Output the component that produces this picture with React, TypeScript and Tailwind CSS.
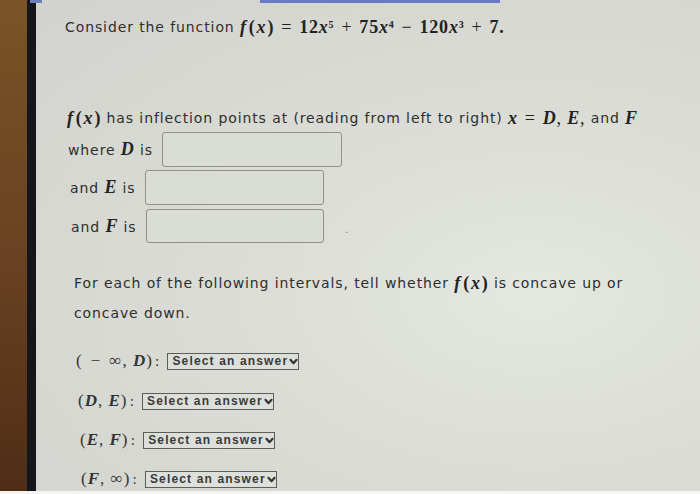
import React from 'react';

const sans = "font-['DejaVu_Sans',sans-serif]";
const serif = "font-['Liberation_Serif','DejaVu_Serif',serif]";
const mathText = `${serif} text-[18px] tracking-[0.8px] text-[#222]`;

const V: React.FC<{ children: React.ReactNode; className?: string }> = ({ children, className = '' }) => (
  <span className={`${serif} italic font-bold ${className}`}>{children}</span>
);

const Num: React.FC<{ children: React.ReactNode }> = ({ children }) => (
  <span className={`${serif} font-bold`}>{children}</span>
);

const Fx = () => (
  <span className={mathText}>
    <V className="pr-[2px]">f</V>
    <Num>(</Num>
    <V className="px-[1px]">x</V>
    <Num>)</Num>
  </span>
);

const Op: React.FC<{ children: React.ReactNode }> = ({ children }) => (
  <span className="mx-[7px]">{children}</span>
);

const AnswerBox: React.FC<{ width: string }> = ({ width }) => (
  <div className={`${width} h-full rounded-[3px] border-[1.5px] border-[#8e918c] bg-[#dadcd6]`} />
);

const SelectBox: React.FC = () => (
  <div className="flex h-[17px] w-[132px] shrink-0 items-center overflow-hidden whitespace-nowrap border border-[#5c5e5a] bg-[#dde0da] pl-[4px]">
    <span className="font-['Liberation_Sans',Arial,sans-serif] text-[12px] font-bold leading-none tracking-[1.15px] text-[#3a3a3a]">
      Select an answer
    </span>
    <svg className="ml-[1px] shrink-0" width="9" height="7" viewBox="0 0 10 8" fill="none">
      <path d="M1.5 2 L5 6 L8.5 2" stroke="#333" strokeWidth="2.4" strokeLinecap="round" strokeLinejoin="round" />
    </svg>
  </div>
);

const Interval: React.FC<{ children: React.ReactNode; ml: string; mt: string }> = ({ children, ml, mt }) => (
  <div className={`flex h-[24px] items-center ${ml} ${mt}`}>
    <span className={`${serif} whitespace-nowrap text-[17px] tracking-[1px] text-[#333]`}>{children}</span>
    <span className={`${sans} ml-[2px] mr-[7px] text-[14px] text-[#333]`}>:</span>
    <SelectBox />
  </div>
);

export default function App() {
  return (
    <div className="flex h-[494px] w-[700px] flex-col overflow-hidden bg-white">
      <div className="flex flex-1">
        <div className="w-[27px] bg-[linear-gradient(180deg,#7a5326_0%,#6a4322_50%,#4f2d17_100%)]" />
        <div className="w-[9px] bg-[#15161b]" />
        <div
          className={`flex flex-1 flex-col ${sans} text-[14px] tracking-[0.9px] text-[#2e2e2e] bg-[radial-gradient(ellipse_at_75%_60%,#e4e8e1_0%,#dadcd5_45%,#d2d3ce_100%)]`}
        >
          <div className="flex h-[3px]">
            <div className="ml-[-6px] w-[12px] bg-[#6f7fb8]" />
            <div className="ml-[218px] w-[240px] bg-[#6d79c2]" />
          </div>

          <div className="ml-[29px] mt-[12px] flex h-[24px] items-center whitespace-nowrap">
            <span>Consider the function&nbsp;</span>
            <span className={mathText}>
              <V className="pr-[2px]">f</V>
              <Num>(</Num>
              <V className="px-[1px]">x</V>
              <Num>)</Num>
              <Op>=</Op>
              <Num>12</Num>
              <V>x</V>
              <sup className="text-[10px] font-bold">5</sup>
              <Op>+</Op>
              <Num>75</Num>
              <V>x</V>
              <sup className="text-[10px] font-bold">4</sup>
              <Op>−</Op>
              <Num>120</Num>
              <V>x</V>
              <sup className="text-[10px] font-bold">3</sup>
              <Op>+</Op>
              <Num>7.</Num>
            </span>
          </div>

          <div className="ml-[31px] mt-[67px] flex h-[24px] items-center whitespace-nowrap">
            <Fx />
            <span>&nbsp;has inflection points at (reading from left to right)&nbsp;</span>
            <span className={mathText}>
              <V>x</V>
              <Op>=</Op>
              <V>D</V>, <V>E</V>,
            </span>
            <span>&nbsp;and&nbsp;</span>
            <span className={mathText}>
              <V>F</V>
            </span>
          </div>

          <div className="ml-[32px] mt-[2px] flex h-[35px] items-center">
            <span className="w-[94px] whitespace-nowrap">
              where <span className={mathText}><V>D</V></span> is
            </span>
            <AnswerBox width="w-[180px]" />
          </div>

          <div className="ml-[34px] mt-[3px] flex h-[35px] items-center">
            <span className="w-[75px] whitespace-nowrap">
              and <span className={mathText}><V>E</V></span> is
            </span>
            <AnswerBox width="w-[179px]" />
          </div>

          <div className="ml-[35px] mt-[4px] flex h-[34px] items-center">
            <span className="w-[75px] whitespace-nowrap">
              and <span className={mathText}><V>F</V></span> is
            </span>
            <AnswerBox width="w-[178px]" />
            <span className="ml-[21px] mt-[6px] text-[10px] text-[#777]">.</span>
          </div>

          <div className="ml-[38px] mt-[28px] flex h-[24px] items-center whitespace-nowrap">
            <span>For each of the following intervals, tell whether&nbsp;</span>
            <Fx />
            <span>&nbsp;is concave up or</span>
          </div>
          <div className="ml-[38px] mt-[6px] flex h-[24px] items-center">concave down.</div>

          <Interval ml="ml-[40px]" mt="mt-[24px]">
            (<span className="mx-[8px]">−</span>∞, <V>D</V>)
          </Interval>
          <Interval ml="ml-[42px]" mt="mt-[16px]">
            (<V>D</V>, <V>E</V>)
          </Interval>
          <Interval ml="ml-[44px]" mt="mt-[15px]">
            (<V>E</V>, <V>F</V>)
          </Interval>
          <Interval ml="ml-[45px]" mt="mt-[15px]">
            (<V>F</V>, ∞)
          </Interval>
        </div>
      </div>
      <div className="h-[4px] bg-[#f4f4f2]" />
    </div>
  );
}
